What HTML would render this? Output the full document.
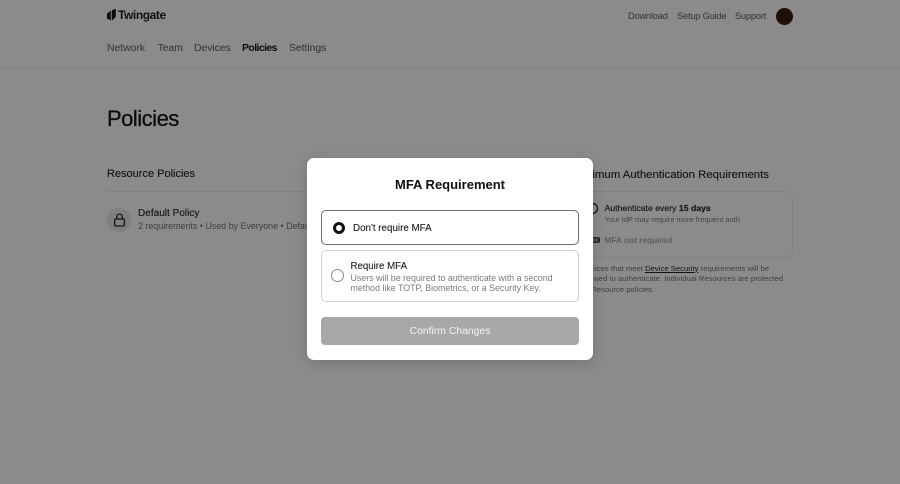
<!DOCTYPE html>
<html>
<head>
<meta charset="utf-8">
<style>
html,body{margin:0;padding:0}
body{width:900px;height:484px;overflow:hidden;background:#8b8b8b;position:relative;font-family:"Liberation Sans",sans-serif;color:#101010}
.t{position:absolute;white-space:nowrap;line-height:1}
.nav{font-size:10.5px;color:#3c3c3c;top:42px;letter-spacing:-.08px;-webkit-text-stroke:.12px #3c3c3c}
.top{font-size:9.2px;color:#3c3c3c;top:12px;letter-spacing:-.15px;-webkit-text-stroke:.1px #3c3c3c}
.sm{font-size:7.7px;color:#3f3f3f}
#modal{position:absolute;left:307px;top:158px;width:286px;height:202px;background:#fff;border-radius:7px;box-shadow:0 3px 14px rgba(0,0,0,.16)}
.opt{position:absolute;left:14px;width:258px;background:#fff;box-sizing:border-box;border-radius:5px}
</style>
</head>
<body>
<svg style="position:absolute;left:106px;top:8px" width="11" height="14" viewBox="0 0 11 14"><path d="M1 5.5 L4.8 2.8 V12.4 L1 10.6 Z M5.8 2.2 L9.8 .8 V8 Q9.8 9 9 9.8 L5.8 12.8 Z" fill="#0c0c0c"/></svg>
<div class="t" style="left:118px;top:9px;font-size:12px;font-weight:bold;color:#111;letter-spacing:-.42px">Twingate</div>

<div class="t nav" style="left:107px;top:42.5px">Network</div>
<div class="t nav" style="left:157.5px;top:42.5px">Team</div>
<div class="t nav" style="left:194px;top:42.5px">Devices</div>
<div class="t nav" style="left:242px;top:42.5px;font-weight:bold;color:#0c0c0c;letter-spacing:-.6px;-webkit-text-stroke:0">Policies</div>
<div class="t nav" style="left:289px;top:42.5px">Settings</div>

<div class="t top" style="left:628px">Download</div>
<div class="t top" style="left:677px">Setup Guide</div>
<div class="t top" style="left:735px">Support</div>
<div style="position:absolute;left:776px;top:8px;width:17px;height:17px;border-radius:50%;background:#210e0a"></div>

<div style="position:absolute;left:0;top:67px;width:900px;height:1px;background:#848484"></div>

<div class="t" style="left:107px;top:108px;font-size:22px;color:#0d0d0d;letter-spacing:-.5px;-webkit-text-stroke:.3px #0d0d0d">Policies</div>

<div class="t" style="left:107px;top:169px;font-size:11px;color:#111;-webkit-text-stroke:.12px #111">Resource Policies</div>
<div style="position:absolute;left:107px;top:191px;width:200px;height:1px;background:#828282"></div>
<div style="position:absolute;left:107px;top:208px;width:24px;height:24px;border-radius:50%;background:#7f7f7f"></div>
<svg style="position:absolute;left:113px;top:213px" width="13" height="14" viewBox="0 0 13 14" fill="none" stroke="#141414" stroke-width="1.3"><rect x="1.6" y="6" width="9.8" height="7" rx="1.2"/><path d="M3.8 6V3.8a2.7 2.7 0 0 1 5.4 0V6"/></svg>
<div class="t" style="left:138px;top:209px;font-size:10px;color:#141414;letter-spacing:.02px;-webkit-text-stroke:.12px #141414">Default Policy</div>
<div class="t" style="left:138px;top:221.5px;font-size:9px;color:#3f3f3f;letter-spacing:-.05px">2 requirements • Used by Everyone • Default</div>

<div class="t" style="right:131px;top:169.5px;font-size:11.4px;color:#111;-webkit-text-stroke:.12px #111">Minimum Authentication Requirements</div>
<div style="position:absolute;left:560px;top:191px;width:233px;height:67px;box-sizing:border-box;border:1px solid #828282;border-radius:8px"></div>
<svg style="position:absolute;left:586px;top:202px" width="13" height="13" viewBox="0 0 13 13" fill="none" stroke="#141414" stroke-width="1.3"><circle cx="6.5" cy="6.5" r="5"/><path d="M6.5 3.5V7H4.5"/></svg>
<div class="t" style="left:604.5px;top:204px;font-size:8.7px;color:#161616;-webkit-text-stroke:.15px #161616">Authenticate every <b>15 days</b></div>
<div class="t sm" style="left:604.5px;top:215.5px;font-size:7.5px;color:#454545">Your IdP may require more frequent auth</div>
<svg style="position:absolute;left:590px;top:236px" width="11" height="8" viewBox="0 0 11 8"><rect x="0" y="1" width="10" height="6" rx="1.5" fill="#333"/><rect x="3" y="2.6" width="1" height="2.8" fill="#8b8b8b"/><rect x="6" y="2.6" width="1" height="2.8" fill="#8b8b8b"/></svg>
<div class="t" style="left:604.5px;top:236px;font-size:8.3px;font-weight:bold;color:#5e5e5e">MFA not required</div>
<div class="t sm" style="right:131px;top:264.5px">Devices that meet <span style="color:#141414;text-decoration:underline">Device Security</span> requirements will be</div>
<div class="t sm" style="right:117px;top:275px">allowed to authenticate. Individual Resources are protected</div>
<div class="t sm" style="right:246px;top:285.5px">Resource policies.</div>

<div id="modal">
  <div class="t" style="left:0;width:286px;text-align:center;top:19.5px;font-size:13px;font-weight:bold;color:#111">MFA Requirement</div>
  <div class="opt" style="top:52px;height:35px;border:1.2px solid #6f6f6f">
    <div style="position:absolute;left:10.5px;top:10.5px;width:12px;height:12px;box-sizing:border-box;border:3.4px solid #141414;border-radius:50%"></div>
    <div class="t" style="left:31px;top:13px;font-size:9.8px;color:#1c1c1c;-webkit-text-stroke:.1px #1c1c1c">Don't require MFA</div>
  </div>
  <div class="opt" style="top:92px;height:52px;border:1px solid #d0d0d0">
    <div style="position:absolute;left:9px;top:18px;width:13px;height:13px;box-sizing:border-box;border:1px solid #8a8a8a;border-radius:50%"></div>
    <div class="t" style="left:28.5px;top:10.5px;font-size:9.7px;color:#1c1c1c;-webkit-text-stroke:.1px #1c1c1c">Require MFA</div>
    <div class="t" style="left:28.5px;top:23px;font-size:8.85px;color:#7b7b7b">Users will be required to authenticate with a second</div>
    <div class="t" style="left:28.5px;top:32.5px;font-size:8.85px;color:#7b7b7b">method like TOTP, Biometrics, or a Security Key.</div>
  </div>
  <div style="position:absolute;left:14px;top:159px;width:258px;height:28px;background:#a8a8a8;border-radius:4px;color:#f4f4f4;font-size:10.4px;line-height:30px;text-align:center">Confirm Changes</div>
</div>
</body>
</html>
